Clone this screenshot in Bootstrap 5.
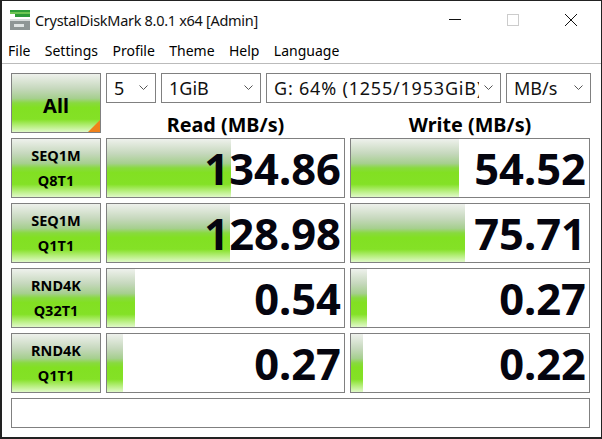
<!DOCTYPE html>
<html lang="en">
<head>
<meta charset="utf-8">
<title>CrystalDiskMark</title>
<link href="https://cdn.jsdelivr.net/npm/bootstrap@5.3.0/dist/css/bootstrap.min.css" rel="stylesheet">
<style>
html,body{height:100%;}
body{background:#fff;font-family:"Noto Sans","Open Sans",sans-serif;color:#000;overflow:hidden;}
.cdm-window{width:602px;height:439px;border:1px solid #222;border-left-width:2px;border-bottom-width:2px;background:#fff;}
.cdm-title{height:38px;padding-left:8px;font-size:14.5px;letter-spacing:-.3px;line-height:38px;color:#111;}
.cdm-icon{width:20px;height:20px;flex:none;margin-right:5px;}
.cdm-caption{color:#111;margin-right:1px;}
.cdm-caption span{width:58px;height:30px;}
.cdm-menu{height:24px;border-bottom:1px solid #bbb;padding-left:6px;font-size:14px;line-height:24px;gap:14.4px;box-sizing:content-box;}
.cdm-grid{display:grid;grid-template-columns:90px 239px 240px;grid-template-rows:60px 60px 60px 60px 60px 30px;gap:5px;margin:9px 0 0 9px;width:580px;}
.cdm-grid>*{min-width:0;}
.cdm-btn{border:1px solid #808080;border-radius:0;padding:0;color:#000;font-weight:700;font-size:14.5px;line-height:25px;position:relative;text-align:center;
 background:linear-gradient(#eef1ec 0,#c6d8bd 25%,#a6cf8f 42%,#88da3e 50%,#82e022 58%,#84e126 78%,#b8ef80 90%,#e0f9c8 100%);}
.cdm-all{font-size:20px;padding-top:4px;}
.cdm-all::after{content:"";position:absolute;right:0;bottom:0;border-style:solid;border-width:0 0 12px 12px;border-color:transparent transparent #f0811a transparent;}
.cdm-top{display:flex;flex-direction:column;gap:5px;margin-bottom:-7px;}
.cdm-selects{display:grid;grid-template-columns:50px 100px 235px 85px;gap:5px;height:30px;width:485px;}
.cdm-sel{appearance:none;border:1px solid #808080;border-radius:0;background-color:#fff;height:30px;font-family:inherit;font-size:18px;line-height:26px;padding:0 26px 0 7px;color:#111;width:100%;
 background-image:url("data:image/svg+xml,%3Csvg xmlns='http://www.w3.org/2000/svg' width='9' height='6'%3E%3Cpath d='M.5.5 4.5 4.5 8.5.5' fill='none' stroke='%23555'/%3E%3C/svg%3E");background-repeat:no-repeat;background-position:right 7px center;background-size:9px 6px;}
.cdm-drive{letter-spacing:.8px;padding-right:21px;}
.cdm-heads{display:grid;grid-template-columns:239px 240px;gap:5px;width:485px;font-weight:700;font-size:19.8px;line-height:30px;padding-top:2px;text-align:center;}
.cdm-cell{border:1px solid #808080;background:#fff;position:relative;overflow:hidden;}
.cdm-bar{position:absolute;left:0;top:0;bottom:0;background:linear-gradient(#eef1ec 0,#c6d8bd 25%,#a6cf8f 42%,#88da3e 50%,#82e022 58%,#84e126 78%,#b8ef80 90%,#e0f9c8 100%);}
.cdm-val{position:relative;font-weight:700;font-size:43.5px;line-height:58px;text-align:right;padding-right:3px;color:#05050f;}
.cdm-status{grid-column:1/4;border:1px solid #808080;}
</style>
</head>
<body>
<div class="cdm-window d-flex flex-column">
  <div class="cdm-title d-flex align-items-center">
    <svg viewBox="0 0 20 20" class="cdm-icon" aria-hidden="true">
      <rect x="0" y="0" width="20" height="2" fill="#2f9f3a"/>
      <rect x="0" y="2" width="20" height="2" fill="#6ec653"/>
      <rect x="5" y="4" width="15" height="3" fill="#2c9a37"/>
      <rect x="0" y="9" width="20" height="2" fill="#d5dad9"/>
      <rect x="0" y="11" width="20" height="9" fill="#8e9695"/>
      <rect x="4" y="14" width="10" height="3" fill="#dfe4e3"/>
    </svg>
    <span class="flex-grow-1">CrystalDiskMark 8.0.1 x64 [Admin]</span>
    <div class="cdm-caption d-flex">
      <span class="d-flex align-items-center justify-content-center"><svg width="12" height="12" viewBox="0 0 12 12"><path d="M0 5.500H12" stroke="#111"/></svg></span>
      <span class="d-flex align-items-center justify-content-center"><svg width="12" height="12" viewBox="0 0 12 12"><rect x=".5" y=".5" width="11" height="11" fill="none" stroke="#ccc"/></svg></span>
      <span class="d-flex align-items-center justify-content-center"><svg width="14" height="14" viewBox="0 0 14 14"><path d="M1 1 13 13M13 1 1 13" stroke="#111" fill="none"/></svg></span>
    </div>
  </div>
  <nav class="cdm-menu d-flex">
    <span>File</span><span>Settings</span><span>Profile</span><span>Theme</span><span>Help</span><span>Language</span>
  </nav>
  <main class="cdm-grid">
    <button class="cdm-btn cdm-all" type="button">All</button>
    <div class="cdm-top" style="grid-column:2/4">
      <div class="cdm-selects">
        <select class="cdm-sel" aria-label="Count"><option>5</option></select>
        <select class="cdm-sel" aria-label="Size"><option>1GiB</option></select>
        <select class="cdm-sel cdm-drive" aria-label="Drive"><option>G: 64% (1255/1953GiB)</option></select>
        <select class="cdm-sel" aria-label="Unit"><option>MB/s</option></select>
      </div>
      <div class="cdm-heads"><div>Read (MB/s)</div><div>Write (MB/s)</div></div>
    </div>

    <button class="cdm-btn" type="button">SEQ1M<br>Q8T1</button>
    <div class="cdm-cell"><div class="cdm-bar" style="width:124px"></div><div class="cdm-val">134.86</div></div>
    <div class="cdm-cell"><div class="cdm-bar" style="width:108px"></div><div class="cdm-val">54.52</div></div>

    <button class="cdm-btn" type="button">SEQ1M<br>Q1T1</button>
    <div class="cdm-cell"><div class="cdm-bar" style="width:123px"></div><div class="cdm-val">128.98</div></div>
    <div class="cdm-cell"><div class="cdm-bar" style="width:114px"></div><div class="cdm-val">75.71</div></div>

    <button class="cdm-btn" type="button">RND4K<br>Q32T1</button>
    <div class="cdm-cell"><div class="cdm-bar" style="width:28px"></div><div class="cdm-val">0.54</div></div>
    <div class="cdm-cell"><div class="cdm-bar" style="width:16px"></div><div class="cdm-val">0.27</div></div>

    <button class="cdm-btn" type="button">RND4K<br>Q1T1</button>
    <div class="cdm-cell"><div class="cdm-bar" style="width:16px"></div><div class="cdm-val">0.27</div></div>
    <div class="cdm-cell"><div class="cdm-bar" style="width:12px"></div><div class="cdm-val">0.22</div></div>

    <div class="cdm-status"></div>
  </main>
</div>
</body>
</html>
